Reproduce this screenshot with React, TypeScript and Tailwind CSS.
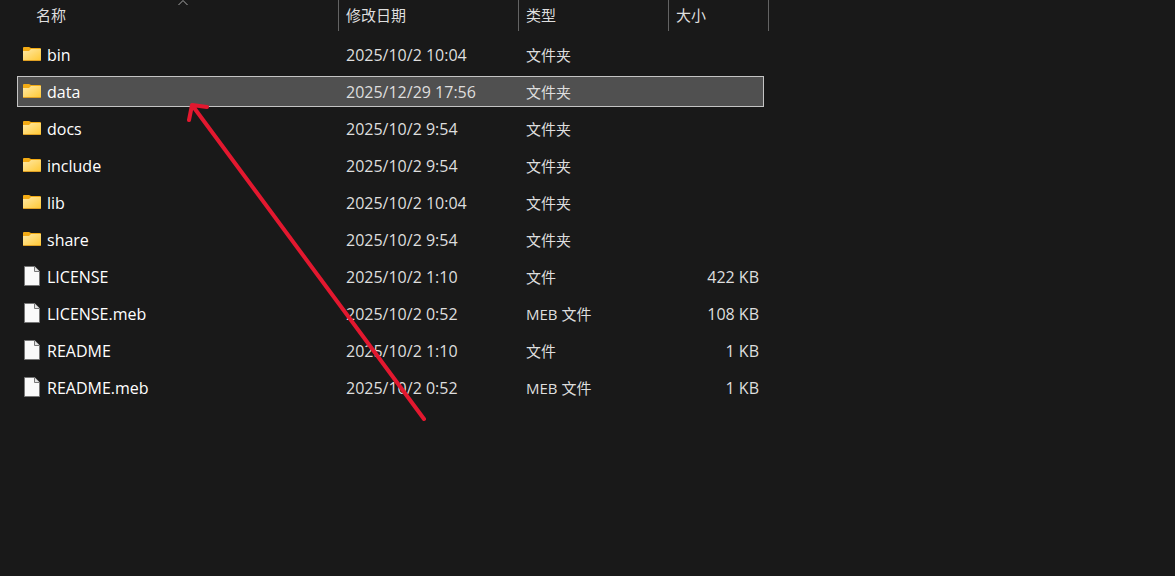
import React, { useState } from 'react';

interface FileEntry {
  name: string;
  modified: string;
  type: string;
  size?: string;
  isFolder?: boolean;
}

const entries: FileEntry[] = [
  { name: 'bin', modified: '2025/10/2 10:04', type: '文件夹', isFolder: true },
  { name: 'data', modified: '2025/12/29 17:56', type: '文件夹', isFolder: true },
  { name: 'docs', modified: '2025/10/2 9:54', type: '文件夹', isFolder: true },
  { name: 'include', modified: '2025/10/2 9:54', type: '文件夹', isFolder: true },
  { name: 'lib', modified: '2025/10/2 10:04', type: '文件夹', isFolder: true },
  { name: 'share', modified: '2025/10/2 9:54', type: '文件夹', isFolder: true },
  { name: 'LICENSE', modified: '2025/10/2 1:10', type: '文件', size: '422 KB' },
  { name: 'LICENSE.meb', modified: '2025/10/2 0:52', type: 'MEB 文件', size: '108 KB' },
  { name: 'README', modified: '2025/10/2 1:10', type: '文件', size: '1 KB' },
  { name: 'README.meb', modified: '2025/10/2 0:52', type: 'MEB 文件', size: '1 KB' },
];

const FolderIcon = () => (
  <svg width="18" height="14" viewBox="0 0 18 14" className="shrink-0" aria-hidden="true">
    <defs>
      <linearGradient id="folder" x1="0" y1="0" x2="1" y2="1">
        <stop offset="0" stopColor="#ffe9a6" />
        <stop offset="1" stopColor="#ffc937" />
      </linearGradient>
    </defs>
    <path d="M0 1a1 1 0 0 1 1-1h5l2 1h9a1 1 0 0 1 1 1v11a1 1 0 0 1-1 1H1a1 1 0 0 1-1-1z" fill="#f3ab14" />
    <path d="M0 4h6l2-2h10v11H0z" fill="url(#folder)" />
    <path d="M0 13h18a1 1 0 0 1-1 1H1a1 1 0 0 1-1-1z" fill="#dfa024" />
  </svg>
);

const FileIcon = () => (
  <svg width="16" height="20" viewBox="0 0 16 20" className="shrink-0" aria-hidden="true">
    <path d="M.5.5h10.2l4.8 4.8v14.2H.5z" fill="#fafafa" stroke="#777" />
    <path d="M10.5.5v5h5" fill="#e4e4e4" stroke="#777" />
  </svg>
);

const HeaderCell: React.FC<{ label: string; wide?: boolean; sorted?: boolean }> = ({ label, wide, sorted }) => (
  <th className="relative h-[31px] border-r border-[#636363] p-0 text-left font-normal" aria-sort={sorted ? 'ascending' : undefined}>
    <button type="button" className={`block h-[31px] w-full pb-0.5 text-left ${wide ? 'pl-[19px]' : 'pl-[7px]'}`}>
      {label}
    </button>
    {sorted && (
      <svg width="10" height="6" viewBox="0 0 10 6" className="absolute top-0 left-1/2" fill="none" stroke="#a8a8a8" aria-hidden="true">
        <path d="M.5 5 5 .5 9.5 5" />
      </svg>
    )}
  </th>
);

const FileRow: React.FC<{ entry: FileEntry; selected: boolean; onSelect: () => void }> = ({ entry, selected, onSelect }) => {
  const fill = selected ? 'border-[#c4c4c4] bg-[#505050]' : 'border-transparent';
  const cell = `flex h-[31px] items-center border-y ${fill}`;

  return (
    <tr onClick={onSelect} aria-selected={selected}>
      <td className="px-0 py-[3px]">
        <div className={`${cell} border-l text-white`}>
          <span className="flex w-[29px] justify-center pr-0.5 pb-px">
            {entry.isFolder ? <FolderIcon /> : <FileIcon />}
          </span>
          {entry.name}
        </div>
      </td>
      <td className="px-0 py-[3px]">
        <div className={`${cell} pl-[7px]`}>{entry.modified}</div>
      </td>
      <td className="px-0 py-[3px]">
        <div className={`${cell} pl-[7px] text-[15px]`}>{entry.type}</div>
      </td>
      <td className="py-[3px] pr-[5px] pl-0">
        <div className={`${cell} justify-end border-r pr-1`}>{entry.size}</div>
      </td>
    </tr>
  );
};

const App: React.FC = () => {
  const [selected, setSelected] = useState('data');

  return (
    <main className="relative min-h-screen overflow-hidden bg-[#191919] pl-[17px] font-['Open_Sans','Noto_Sans_CJK_SC',sans-serif] text-[16px] leading-5 text-[#dedede]">
      <table className="w-[752px] table-fixed border-separate border-spacing-0 cursor-default">
        <colgroup>
          <col className="w-[322px]" />
          <col className="w-[180px]" />
          <col className="w-[150px]" />
          <col className="w-[100px]" />
        </colgroup>
        <thead className="text-[15px]">
          <tr>
            <HeaderCell label="名称" wide sorted />
            <HeaderCell label="修改日期" />
            <HeaderCell label="类型" />
            <HeaderCell label="大小" />
          </tr>
        </thead>
        <tbody className="before:block before:h-[5px]">
          {entries.map((entry) => (
            <FileRow
              key={entry.name}
              entry={entry}
              selected={entry.name === selected}
              onSelect={() => setSelected(entry.name)}
            />
          ))}
        </tbody>
      </table>

      {/* Hand-drawn arrow pointing at the data folder */}
      <svg
        width="240"
        height="322"
        viewBox="0 0 240 322"
        className="pointer-events-none absolute top-[101px] left-[186px]"
        fill="none"
        stroke="#e3182f"
        strokeWidth="4"
        strokeLinecap="round"
        strokeLinejoin="round"
        aria-hidden="true"
      >
        <path d="M238 318 6 4M3 19 6 4l15 2" />
      </svg>
    </main>
  );
};

export default App;
